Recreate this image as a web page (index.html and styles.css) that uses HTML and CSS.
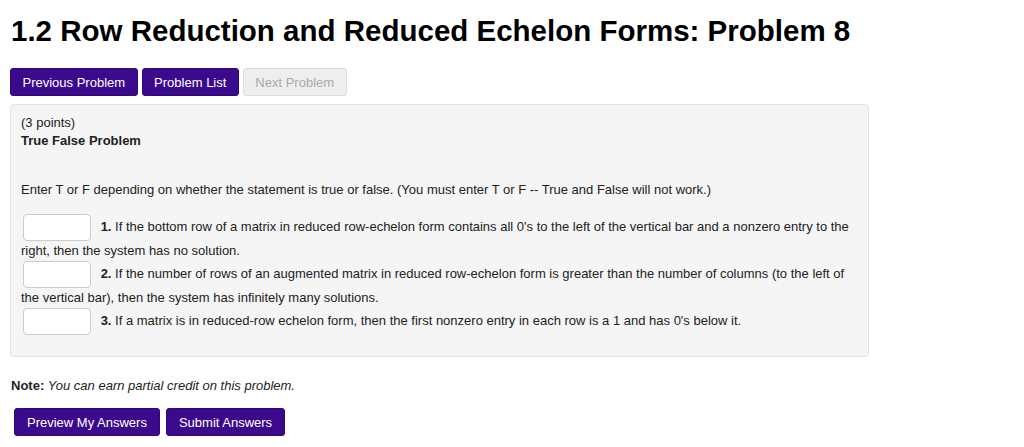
FILE: index.html
```html
<!DOCTYPE html>
<html lang="en">
<head>
  <meta charset="UTF-8" />
  <title>1.2 Row Reduction and Reduced Echelon Forms: Problem 8</title>
  <link rel="stylesheet" href="styles.css">
</head>
<body>

  <h1>1.2 Row Reduction and Reduced Echelon Forms: Problem 8</h1>

  <div class="nav">
    <button class="btn">Previous Problem</button>
    <button class="btn">Problem List</button>
    <button class="btn disabled" disabled>Next Problem</button>
  </div>

  <div class="problem">
    <div class="points">(3 points)</div>
    <div class="title">True False Problem</div>

    <p class="intro">Enter T or F depending on whether the statement is true or false. (You must enter T or F -- True and False will not work.)</p>

    <p class="items">
      <input class="answer" type="text"> <b>1.</b> If the bottom row of a matrix in reduced row-echelon form contains all 0's to the left of the vertical bar and a nonzero entry to the right, then the system has no solution.<br>
      <input class="answer" type="text"> <b>2.</b> If the number of rows of an augmented matrix in reduced row-echelon form is greater than the number of columns (to the left of the vertical bar), then the system has infinitely many solutions.<br>
      <input class="answer" type="text"> <b>3.</b> If a matrix is in reduced-row echelon form, then the first nonzero entry in each row is a 1 and has 0's below it.
    </p>
  </div>

  <p class="note"><b>Note:</b> <i>You can earn partial credit on this problem.</i></p>

  <div class="submit">
    <button class="btn">Preview My Answers</button>
    <button class="btn">Submit Answers</button>
  </div>

</body>
</html>
```

FILE: styles.css
```css
body {
  font-family: "Liberation Sans", Arial, sans-serif;
  font-size: 13px;
  line-height: 18px;
  color: #222;
  margin: 0;
  padding: 0 10px;
}
h1 {
  font-size: 29.5px;
  line-height: 36px;
  font-weight: bold;
  color: #000;
  margin: 13px 0 0 1px;
}
.btn {
  font-family: inherit;
  font-size: 13px;
  color: #fff;
  background-color: #3b0a8c;
  border: 1px solid #30087a;
  border-radius: 3px;
  height: 28px;
  padding: 0 11.5px;
  margin: 0 4px 0 0;
  cursor: pointer;
}
.btn.disabled {
  background-color: #eee;
  color: #aaa;
  border-color: #ddd;
  cursor: default;
}
.nav {
  display: flex;
  margin-top: 19px;
}
.problem {
  margin-top: 8px;
  width: 837px;
  background-color: #f5f5f5;
  border: 1px solid #e3e3e3;
  border-radius: 4px;
  padding: 9px 10px 20px;
}
.title {
  font-weight: bold;
}
.intro {
  margin: 31px 0 14px;
}
.items {
  margin: 0;
}
.answer {
  box-sizing: border-box;
  width: 68px;
  height: 27px;
  margin: 1px 6px 1px 2px;
  border: 1px solid #ccc;
  border-radius: 4px;
  background: #fff;
  vertical-align: middle;
}
.note {
  margin: 20px 0 13px 1px;
}
.submit {
  display: flex;
  gap: 2px;
  padding-left: 4px;
}
.submit .btn {
  padding: 0 12px;
}
```
